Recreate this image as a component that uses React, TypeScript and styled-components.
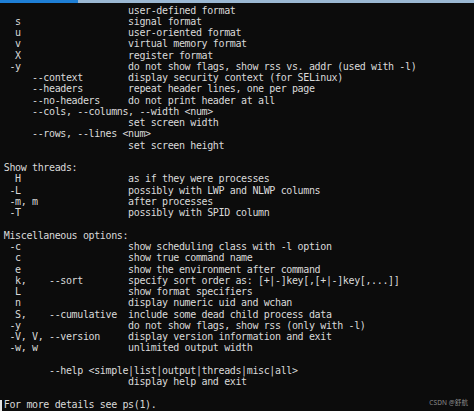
import React from "react";
import styled, { createGlobalStyle } from "styled-components";

const Global = createGlobalStyle`
  html, body { margin: 0; padding: 0; background: #0c0c0c; }
  body { width: 474px; height: 411px; overflow: hidden; }
`;

const Window = styled.div`
  position: relative;
  width: 474px;
  height: 411px;
  background: #0c0c0c;
  display: flex;
  flex-direction: column;
  overflow: hidden;
`;

const TitleEdge = styled.div`
  display: flex;
  height: 3px;
  flex-shrink: 0;
`;

const EdgeSegment = styled.div<{ $active?: boolean }>`
  flex: ${(p) => (p.$active ? "0 0 78px" : "1 1 auto")};
  background: ${(p) => (p.$active ? "#1e7fd6" : "#9bb8d3")};
`;

const Output = styled.pre`
  margin: 0;
  padding: 1.5px 0 0 3.8px;
  font-family: "DejaVu Sans Mono", "Liberation Mono", monospace;
  font-size: 10px;
  letter-spacing: -0.37px;
  line-height: 11.28px;
  color: #dadada;
  white-space: pre;
`;

const Line = styled.div`
  height: 11.28px;
`;

const LeftMark = styled.div`
  position: absolute;
  left: 0;
  bottom: 0;
  width: 2px;
  height: 11px;
  background: #e6e6e6;
`;

const Watermark = styled.div`
  position: absolute;
  right: 6px;
  bottom: 4px;
  font-family: "Noto Sans", "Noto Sans CJK SC", sans-serif;
  font-size: 6.5px;
  color: #8a8a8a;
  letter-spacing: 0.1px;
`;

const lines = [
  "                      user-defined format",
  "  s                   signal format",
  "  u                   user-oriented format",
  "  v                   virtual memory format",
  "  X                   register format",
  " -y                   do not show flags, show rss vs. addr (used with -l)",
  "     --context        display security context (for SELinux)",
  "     --headers        repeat header lines, one per page",
  "     --no-headers     do not print header at all",
  "     --cols, --columns, --width <num>",
  "                      set screen width",
  "     --rows, --lines <num>",
  "                      set screen height",
  "",
  "Show threads:",
  "  H                   as if they were processes",
  " -L                   possibly with LWP and NLWP columns",
  " -m, m                after processes",
  " -T                   possibly with SPID column",
  "",
  "Miscellaneous options:",
  " -c                   show scheduling class with -l option",
  "  c                   show true command name",
  "  e                   show the environment after command",
  "  k,    --sort        specify sort order as: [+|-]key[,[+|-]key[,...]]",
  "  L                   show format specifiers",
  "  n                   display numeric uid and wchan",
  "  S,    --cumulative  include some dead child process data",
  " -y                   do not show flags, show rss (only with -l)",
  " -V, V, --version     display version information and exit",
  " -w, w                unlimited output width",
  "",
  "        --help <simple|list|output|threads|misc|all>",
  "                      display help and exit",
  "",
  "For more details see ps(1).",
];

export default function App() {
  return (
    <>
      <Global />
      <Window>
        <TitleEdge>
          <EdgeSegment $active />
          <EdgeSegment />
        </TitleEdge>
        <Output>
          {lines.map((l, i) => (
            <Line key={i}>{l || " "}</Line>
          ))}
        </Output>
        <LeftMark />
        <Watermark>CSDN @舒航</Watermark>
      </Window>
    </>
  );
}
